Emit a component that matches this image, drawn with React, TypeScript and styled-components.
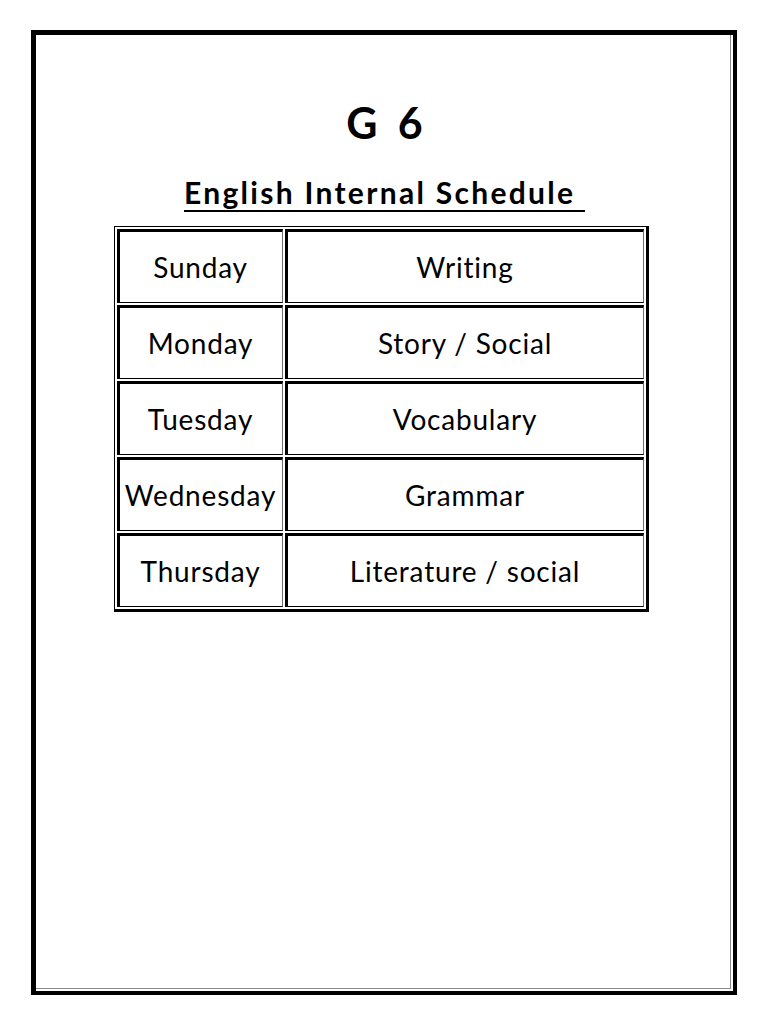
import React from 'react'
import styled, { createGlobalStyle } from 'styled-components'

const GlobalStyle = createGlobalStyle`
  html, body {
    margin: 0;
    padding: 0;
    background: #fff;
  }
  body {
    font-family: Lato, "Open Sans", sans-serif;
    color: #000;
  }
`

const Page = styled.div`
  box-sizing: border-box;
  width: 706px;
  height: 965px;
  margin: 30px 0 0 31px;
  border-style: solid;
  border-color: #000;
  border-width: 5px 4px 4px 5px;
  box-shadow: inset -2px -2px 0 #fff, inset -3px -3px 0 #8a8a8a;
  padding-top: 62px;
  display: flex;
  flex-direction: column;
  align-items: center;
`

const Grade = styled.h1`
  margin: 0;
  font-size: 43px;
  font-weight: 700;
  line-height: 1.2;
  word-spacing: 10px;
`

const Heading = styled.h2`
  margin: 25px 0 0;
  font-size: 30px;
  font-weight: 700;
  line-height: 1.2;
  letter-spacing: 2.3px;
  text-decoration: underline;
  text-decoration-thickness: 2px;
  text-underline-offset: 6px;
  white-space: pre;
`

const Table = styled.table`
  margin: 16px 7px 0 0;
  border-collapse: separate;
  border-spacing: 2px;
  border-style: solid;
  border-color: #000;
  border-width: 1px 3px 3px 1px;
`

const Cell = styled.td<{ $wide?: boolean }>`
  box-sizing: border-box;
  width: ${p => (p.$wide ? '359px' : '166px')};
  height: 74px;
  padding: 0;
  text-align: center;
  vertical-align: middle;
  font-size: 28px;
  letter-spacing: 0.8px;
  border-style: solid;
  border-width: 3px 1px 1px 3px;
  border-color: #000 #6f6f6f #000 #000;
`

const rows = [
  ['Sunday', 'Writing'],
  ['Monday', 'Story / Social'],
  ['Tuesday', 'Vocabulary'],
  ['Wednesday', 'Grammar'],
  ['Thursday', 'Literature / social'],
]

export default function App() {
  return (
    <>
      <GlobalStyle />
      <Page>
        <Grade>G 6</Grade>
        <Heading>English Internal Schedule </Heading>
        <Table>
          <tbody>
            {rows.map(([day, subject]) => (
              <tr key={day}>
                <Cell>{day}</Cell>
                <Cell $wide>{subject}</Cell>
              </tr>
            ))}
          </tbody>
        </Table>
      </Page>
    </>
  )
}
